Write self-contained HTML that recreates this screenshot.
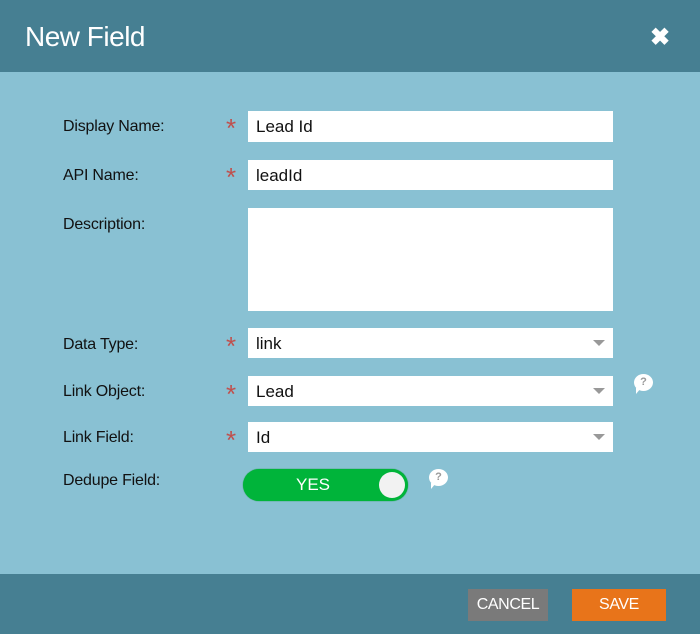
<!DOCTYPE html><html><head><style>
body{margin:0;width:700px;height:634px;background:#89c1d3;font-family:"Liberation Sans",sans-serif;position:relative;overflow:hidden}
.hdr{position:absolute;left:0;top:0;width:700px;height:72px;background:#467f92}
.hdr h1{position:absolute;left:25px;top:21px;margin:0;font-weight:normal;color:#fff;font-size:28px;letter-spacing:-0.5px}
.x{position:absolute;left:650px;top:28px;color:#fff;font-size:24px;font-weight:bold;line-height:20px}
.ftr{position:absolute;left:0;top:574px;width:700px;height:60px;background:#467f92}
.lbl{position:absolute;left:63px;font-size:16px;color:#111;letter-spacing:-0.2px}
.ast{position:absolute;left:226px;font-size:26px;color:#c0504d;line-height:20px}
.in{position:absolute;left:248px;width:365px;background:#fff;font-size:17px;color:#111;box-sizing:border-box;padding:6px 8px}
.dd:after{content:"";position:absolute;right:8px;top:12px;border-left:6px solid transparent;border-right:6px solid transparent;border-top:6px solid #999}
.help{position:absolute;width:19px;height:17px;border-radius:50%;background:#fff;color:#999;font-size:11px;font-weight:bold;text-align:center;line-height:17px}
.help:after{content:"";position:absolute;left:2px;bottom:-3px;border-top:6px solid #fff;border-right:5px solid transparent}
.btn{position:absolute;top:589px;height:32px;color:#fff;font-size:16px;text-align:center;line-height:32px;letter-spacing:-0.4px}
</style></head><body>
<div class="hdr"><h1>New Field</h1><div class="x">✖</div></div>
<div class="lbl" style="top:118px">Display Name:</div><div class="ast" style="top:118px">*</div><div class="in" style="top:111px;height:31px">Lead Id</div>
<div class="lbl" style="top:167px">API Name:</div><div class="ast" style="top:167px">*</div><div class="in" style="top:160px;height:30px">leadId</div>
<div class="lbl" style="top:216px">Description:</div><div class="in" style="top:208px;height:103px"></div>
<div class="lbl" style="top:336px">Data Type:</div><div class="ast" style="top:336px">*</div><div class="in dd" style="top:328px;height:30px">link</div>
<div class="lbl" style="top:383px">Link Object:</div><div class="ast" style="top:384px">*</div><div class="in dd" style="top:376px;height:30px">Lead</div>
<div class="lbl" style="top:429px">Link Field:</div><div class="ast" style="top:430px">*</div><div class="in dd" style="top:422px;height:30px">Id</div>
<div class="lbl" style="top:472px">Dedupe Field:</div>
<div style="position:absolute;left:243px;top:469px;width:165px;height:32px;border-radius:16px;background:#00b43a;color:#fff;font-size:17px;line-height:32px;box-shadow:0 0 1px #0a8a30"><span style="position:absolute;left:53px">YES</span><div style="position:absolute;right:3px;top:3px;width:26px;height:26px;border-radius:50%;background:#f2f2f2"></div></div>
<div class="help" style="left:634px;top:374px">?</div>
<div class="help" style="left:429px;top:469px">?</div>
<div class="ftr"></div>
<div class="btn" style="left:468px;width:80px;background:#7a7a7a">CANCEL</div>
<div class="btn" style="left:572px;width:94px;background:#e8741a">SAVE</div>
</body></html>
